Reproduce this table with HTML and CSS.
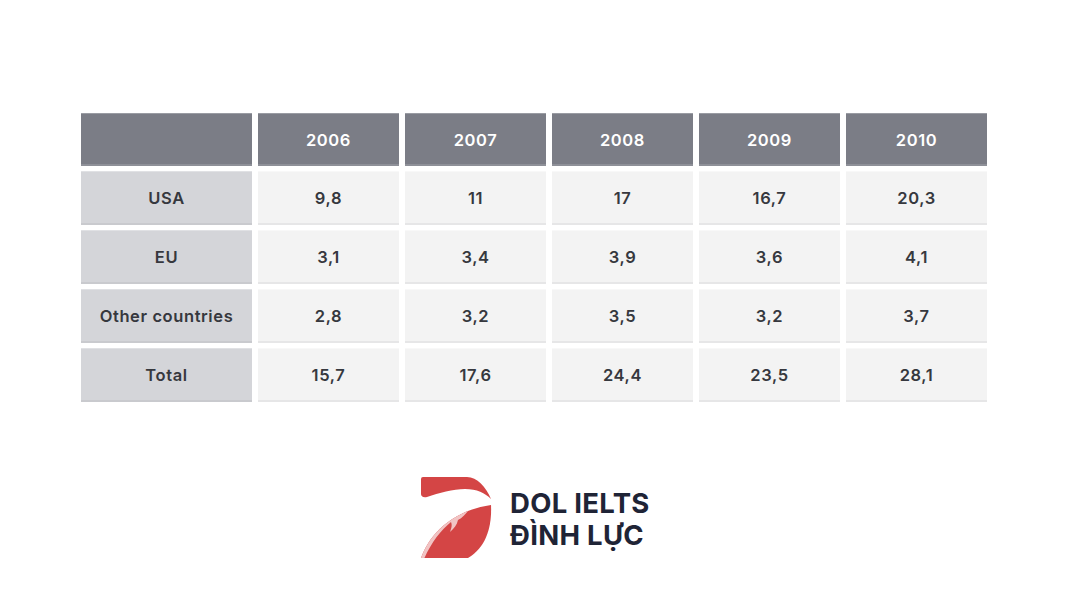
FILE: index.html
```html
<!DOCTYPE html>
<html>
<head>
<meta charset="utf-8">
<link rel="stylesheet" href="styles.css">
</head>
<body>
<div class="page">
  <div class="table">
    <div class="cell head"></div>
    <div class="cell head">2006</div>
    <div class="cell head">2007</div>
    <div class="cell head">2008</div>
    <div class="cell head">2009</div>
    <div class="cell head">2010</div>

    <div class="cell label">USA</div>
    <div class="cell data">9,8</div>
    <div class="cell data">11</div>
    <div class="cell data">17</div>
    <div class="cell data">16,7</div>
    <div class="cell data">20,3</div>

    <div class="cell label">EU</div>
    <div class="cell data">3,1</div>
    <div class="cell data">3,4</div>
    <div class="cell data">3,9</div>
    <div class="cell data">3,6</div>
    <div class="cell data">4,1</div>

    <div class="cell label">Other countries</div>
    <div class="cell data">2,8</div>
    <div class="cell data">3,2</div>
    <div class="cell data">3,5</div>
    <div class="cell data">3,2</div>
    <div class="cell data">3,7</div>

    <div class="cell label">Total</div>
    <div class="cell data">15,7</div>
    <div class="cell data">17,6</div>
    <div class="cell data">24,4</div>
    <div class="cell data">23,5</div>
    <div class="cell data">28,1</div>
  </div>

  <div class="brand">
    <svg class="mark" width="72" height="84" viewBox="0 0 72 84">
      <defs>
        <clipPath id="lowerClip">
          <path d="M70 30 C71 50 66 72 47 83 H0 C8 60 30 36 70 30 Z"/>
        </clipPath>
      </defs>
      <path fill="#d44545" d="M0 4 Q0 2 2 2 H46 C56 2 65 12 70 24 C64 18 56 14 44 14 C32 14 18 18 6 22 C2 23 0 21 0 19 Z"/>
      <path fill="#d44545" d="M70 30 C71 50 66 72 47 83 H0 C8 60 30 36 70 30 Z"/>
      <g clip-path="url(#lowerClip)">
        <path fill="#f1c4c4" d="M50 20 L49 33 C45 39 41 43 37 45 C36 50 33 53 29 57 C31 52 31 49 30 47 C20 55 10 68 3 84 H-10 L-10 20 Z"/>
      </g>
    </svg>
    <div class="name">
      <div>DOL IELTS</div>
      <div>ĐÌNH LỰC</div>
    </div>
  </div>
</div>
</body>
</html>
```
FILE: styles.css
```css
html, body {
  margin: 0;
  padding: 0;
  background: #ffffff;
}

.page {
  width: 1069px;
  height: 601px;
  padding-top: 113px;
  box-sizing: border-box;
  font-family: Inter, "Liberation Sans", sans-serif;
}

.table {
  margin-left: 81px;
  width: 906px;
  display: grid;
  grid-template-columns: 171px repeat(5, 141px);
  grid-template-rows: 53px repeat(4, 54px);
  column-gap: 6px;
  row-gap: 5px;
}

.cell {
  display: flex;
  align-items: center;
  justify-content: center;
  font-size: 16.5px;
  font-weight: 600;
  letter-spacing: 0.6px;
  color: #36383e;
  box-sizing: border-box;
}

.head {
  background: #7b7d86;
  color: #ffffff;
  box-shadow: inset 0 1px 0 #9a9ca3, inset 0 -2px 0 #8e9098;
  padding-top: 1px;
}

.label {
  background: #d4d5d9;
  box-shadow: inset 0 1px 0 #e0e1e4, inset 0 -2px 0 #c9cace;
}

.data {
  background: #f3f3f3;
  box-shadow: inset 0 1px 0 #f8f8f8, inset 0 -2px 0 #e6e6e7;
}

.brand {
  margin-top: 73px;
  margin-left: 421px;
  display: flex;
  align-items: center;
  gap: 17px;
}

.mark {
  display: block;
  flex: none;
}

.name {
  font-family: Inter, "Liberation Sans", sans-serif;
  font-weight: 700;
  font-size: 27.5px;
  line-height: 32px;
  letter-spacing: 0.3px;
  color: #1f2436;
  padding-top: 3px;
}
```
